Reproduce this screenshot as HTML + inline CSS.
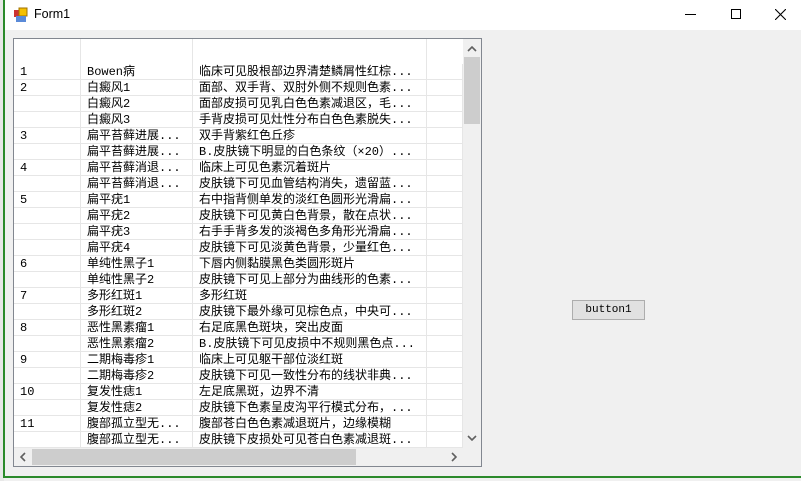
<!DOCTYPE html>
<html><head><meta charset="utf-8"><style>
*{margin:0;padding:0;box-sizing:border-box}
body{width:801px;height:481px;overflow:hidden;background:#f0f0f0;position:relative;font-family:"Liberation Sans","Noto Sans CJK SC",sans-serif}
.abs{position:absolute}
#grid{left:13px;top:38px;width:469px;height:429px;border:1px solid #828790;background:#f0f0f0;overflow:hidden}
.row{position:absolute;left:0;width:449px;height:16px;background:#fff;border-bottom:1px solid #e6e6e6;font-family:"Liberation Mono","Noto Sans CJK SC",monospace;font-size:12px;line-height:17px;color:#000;white-space:nowrap}
.row span{position:absolute;top:0;height:16px;border-right:1px solid #e6e6e6}
.c0{left:0;width:67px;padding-left:6px}
.c1{left:67px;width:112px;padding-left:6px}
.c2{left:179px;width:234px;padding-left:6px}
.c3{left:413px;width:36px}
</style></head><body>
<div class="abs" style="left:0;top:0;width:4px;height:481px;background:#e8e8e8"></div>
<div class="abs" style="left:3px;top:0;width:2px;height:477px;background:#2b8a2b"></div>
<div class="abs" style="left:3px;top:476px;width:798px;height:2px;background:#2b8a2b"></div>
<div class="abs" style="left:5px;top:0;width:796px;height:30px;background:#fff"></div>
<svg class="abs" style="left:13px;top:7px" width="16" height="16" viewBox="0 0 16 16"><rect x="1" y="3" width="6" height="7" fill="#c33"/><rect x="6" y="1" width="8" height="8" fill="#f5c000" stroke="#a07000"/><rect x="3" y="9" width="10" height="6" fill="#5a8ad8"/></svg>
<div class="abs" style="left:34px;top:7px;font-size:12.5px;color:#000">Form1</div>
<div class="abs" style="left:685px;top:14px;width:11px;height:1px;background:#000"></div>
<div class="abs" style="left:731px;top:9px;width:10px;height:10px;border:1px solid #000"></div>
<svg class="abs" style="left:775px;top:9px" width="11" height="11"><path d="M0 0L11 11M11 0L0 11" stroke="#000" stroke-width="1.1"/></svg>
<div id="grid" class="abs">
<div class="row" style="top:0;height:25px;border:none"><span class="c0" style="height:25px"></span><span class="c1" style="height:25px"></span><span class="c2" style="height:25px"></span><span class="c3" style="height:25px;border:none"></span></div>
<div class="row" style="top:25px"><span class="c0">1</span><span class="c1">Bowen病</span><span class="c2">临床可见股根部边界清楚鳞屑性红棕...</span><span class="c3"></span></div>
<div class="row" style="top:41px"><span class="c0">2</span><span class="c1">白癜风1</span><span class="c2">面部、双手背、双肘外侧不规则色素...</span><span class="c3"></span></div>
<div class="row" style="top:57px"><span class="c0"></span><span class="c1">白癜风2</span><span class="c2">面部皮损可见乳白色色素减退区，毛...</span><span class="c3"></span></div>
<div class="row" style="top:73px"><span class="c0"></span><span class="c1">白癜风3</span><span class="c2">手背皮损可见灶性分布白色色素脱失...</span><span class="c3"></span></div>
<div class="row" style="top:89px"><span class="c0">3</span><span class="c1">扁平苔藓进展...</span><span class="c2">双手背紫红色丘疹</span><span class="c3"></span></div>
<div class="row" style="top:105px"><span class="c0"></span><span class="c1">扁平苔藓进展...</span><span class="c2">B.皮肤镜下明显的白色条纹（×20）...</span><span class="c3"></span></div>
<div class="row" style="top:121px"><span class="c0">4</span><span class="c1">扁平苔藓消退...</span><span class="c2">临床上可见色素沉着斑片</span><span class="c3"></span></div>
<div class="row" style="top:137px"><span class="c0"></span><span class="c1">扁平苔藓消退...</span><span class="c2">皮肤镜下可见血管结构消失，遗留蓝...</span><span class="c3"></span></div>
<div class="row" style="top:153px"><span class="c0">5</span><span class="c1">扁平疣1</span><span class="c2">右中指背侧单发的淡红色圆形光滑扁...</span><span class="c3"></span></div>
<div class="row" style="top:169px"><span class="c0"></span><span class="c1">扁平疣2</span><span class="c2">皮肤镜下可见黄白色背景，散在点状...</span><span class="c3"></span></div>
<div class="row" style="top:185px"><span class="c0"></span><span class="c1">扁平疣3</span><span class="c2">右手手背多发的淡褐色多角形光滑扁...</span><span class="c3"></span></div>
<div class="row" style="top:201px"><span class="c0"></span><span class="c1">扁平疣4</span><span class="c2">皮肤镜下可见淡黄色背景，少量红色...</span><span class="c3"></span></div>
<div class="row" style="top:217px"><span class="c0">6</span><span class="c1">单纯性黑子1</span><span class="c2">下唇内侧黏膜黑色类圆形斑片</span><span class="c3"></span></div>
<div class="row" style="top:233px"><span class="c0"></span><span class="c1">单纯性黑子2</span><span class="c2">皮肤镜下可见上部分为曲线形的色素...</span><span class="c3"></span></div>
<div class="row" style="top:249px"><span class="c0">7</span><span class="c1">多形红斑1</span><span class="c2">多形红斑</span><span class="c3"></span></div>
<div class="row" style="top:265px"><span class="c0"></span><span class="c1">多形红斑2</span><span class="c2">皮肤镜下最外缘可见棕色点，中央可...</span><span class="c3"></span></div>
<div class="row" style="top:281px"><span class="c0">8</span><span class="c1">恶性黑素瘤1</span><span class="c2">右足底黑色斑块，突出皮面</span><span class="c3"></span></div>
<div class="row" style="top:297px"><span class="c0"></span><span class="c1">恶性黑素瘤2</span><span class="c2">B.皮肤镜下可见皮损中不规则黑色点...</span><span class="c3"></span></div>
<div class="row" style="top:313px"><span class="c0">9</span><span class="c1">二期梅毒疹1</span><span class="c2">临床上可见躯干部位淡红斑</span><span class="c3"></span></div>
<div class="row" style="top:329px"><span class="c0"></span><span class="c1">二期梅毒疹2</span><span class="c2">皮肤镜下可见一致性分布的线状非典...</span><span class="c3"></span></div>
<div class="row" style="top:345px"><span class="c0">10</span><span class="c1">复发性痣1</span><span class="c2">左足底黑斑，边界不清</span><span class="c3"></span></div>
<div class="row" style="top:361px"><span class="c0"></span><span class="c1">复发性痣2</span><span class="c2">皮肤镜下色素呈皮沟平行模式分布，...</span><span class="c3"></span></div>
<div class="row" style="top:377px"><span class="c0">11</span><span class="c1">腹部孤立型无...</span><span class="c2">腹部苍白色色素减退斑片，边缘模糊</span><span class="c3"></span></div>
<div class="row" style="top:393px"><span class="c0"></span><span class="c1">腹部孤立型无...</span><span class="c2">皮肤镜下皮损处可见苍白色素减退斑...</span><span class="c3"></span></div>
<div class="abs" style="left:449px;top:0;width:18px;height:409px;background:#f0f0f0"></div>
<div class="abs" style="left:450px;top:18px;width:16px;height:67px;background:#cdcdcd"></div>
<svg class="abs" style="left:453px;top:7px" width="10" height="6"><path d="M1 5L5 1L9 5" stroke="#606060" stroke-width="1.6" fill="none"/></svg>
<svg class="abs" style="left:453px;top:396px" width="10" height="6"><path d="M1 1L5 5L9 1" stroke="#606060" stroke-width="1.6" fill="none"/></svg>
<div class="abs" style="left:0;top:409px;width:467px;height:18px;background:#f0f0f0"></div>
<div class="abs" style="left:18px;top:410px;width:324px;height:16px;background:#cdcdcd"></div>
<svg class="abs" style="left:6px;top:413px" width="6" height="10"><path d="M5 1L1 5L5 9" stroke="#606060" stroke-width="1.6" fill="none"/></svg>
<svg class="abs" style="left:437px;top:413px" width="6" height="10"><path d="M1 1L5 5L1 9" stroke="#606060" stroke-width="1.6" fill="none"/></svg>
</div>
<div class="abs" style="left:572px;top:300px;width:73px;height:20px;background:#e1e1e1;border:1px solid #adadad;font-family:'Liberation Mono',monospace;font-size:11px;line-height:18px;text-align:center">button1</div>
</body></html>
